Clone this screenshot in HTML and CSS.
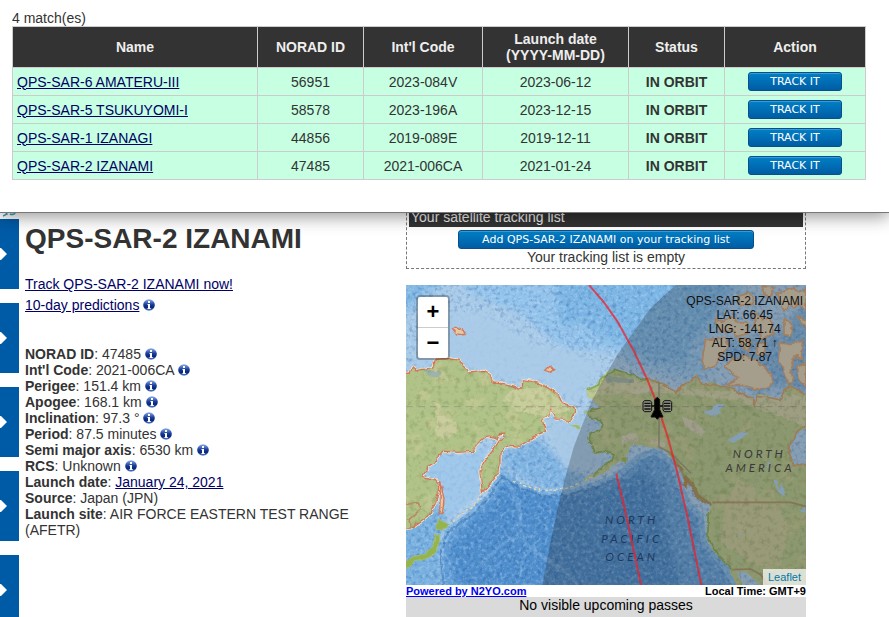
FILE: index.html
```html
<!DOCTYPE html>
<html lang="en">
<head>
<meta charset="utf-8">
<title>QPS-SAR-2 IZANAMI</title>
<link rel="stylesheet" href="styles.css">
</head>
<body>
<svg class="defs" aria-hidden="true">
  <defs>
    <linearGradient id="ball" x1="0" y1="0" x2="0" y2="1">
      <stop offset="0" stop-color="#8fb0ee"/>
      <stop offset=".45" stop-color="#1b3f9c"/>
      <stop offset=".7" stop-color="#0a2474"/>
      <stop offset="1" stop-color="#5c8be0"/>
    </linearGradient>
    <symbol id="info" viewBox="0 0 12 12">
      <circle cx="6" cy="6" r="5.8" fill="url(#ball)"/>
      <rect x="5" y="2" width="2" height="2" fill="#fff"/>
      <path d="M4.5 5h2.5v4h.7v1H4.5V9H5V6h-.5z" fill="#fff"/>
    </symbol>
  </defs>
</svg>

<section class="results">
  <div class="count">4 match(es)</div>
  <table class="matches">
    <colgroup><col class="c-name"><col class="c-norad"><col class="c-code"><col class="c-date"><col class="c-status"><col class="c-action"></colgroup>
    <thead>
      <tr><th>Name</th><th>NORAD ID</th><th>Int'l Code</th><th>Launch date<br>(YYYY-MM-DD)</th><th>Status</th><th>Action</th></tr>
    </thead>
    <tbody>
      <tr><td><a href="#">QPS-SAR-6 AMATERU-III</a></td><td>56951</td><td>2023-084V</td><td>2023-06-12</td><td><b>IN ORBIT</b></td><td><button class="btn track">TRACK IT</button></td></tr>
      <tr><td><a href="#">QPS-SAR-5 TSUKUYOMI-I</a></td><td>58578</td><td>2023-196A</td><td>2023-12-15</td><td><b>IN ORBIT</b></td><td><button class="btn track">TRACK IT</button></td></tr>
      <tr><td><a href="#">QPS-SAR-1 IZANAGI</a></td><td>44856</td><td>2019-089E</td><td>2019-12-11</td><td><b>IN ORBIT</b></td><td><button class="btn track">TRACK IT</button></td></tr>
      <tr><td><a href="#">QPS-SAR-2 IZANAMI</a></td><td>47485</td><td>2021-006CA</td><td>2021-01-24</td><td><b>IN ORBIT</b></td><td><button class="btn track">TRACK IT</button></td></tr>
    </tbody>
  </table>
</section>

<main class="page">
  <nav class="rail">
    <svg class="swirl" viewBox="0 0 13 8" aria-hidden="true"><path d="M0 7L4 5C2 3 3 1 6 1s6 2 6 3-3 2-5 1" fill="none" stroke="#3aa0b4" stroke-width="1.4"/></svg>
    <a class="tab" href="#" aria-label="Open panel 1"><svg viewBox="0 0 7 14"><path d="M0 1L1 1L7 7L1 13L0 13Z"/></svg></a>
    <a class="tab" href="#" aria-label="Open panel 2"><svg viewBox="0 0 7 14"><path d="M0 1L1 1L7 7L1 13L0 13Z"/></svg></a>
    <a class="tab" href="#" aria-label="Open panel 3"><svg viewBox="0 0 7 14"><path d="M0 1L1 1L7 7L1 13L0 13Z"/></svg></a>
    <a class="tab" href="#" aria-label="Open panel 4"><svg viewBox="0 0 7 14"><path d="M0 1L1 1L7 7L1 13L0 13Z"/></svg></a>
    <a class="tab" href="#" aria-label="Open panel 5"><svg viewBox="0 0 7 14"><path d="M0 1L1 1L7 7L1 13L0 13Z"/></svg></a>
  </nav>

  <article class="details">
    <h1>QPS-SAR-2 IZANAMI</h1>
    <div class="links">
      <div><a href="#">Track QPS-SAR-2 IZANAMI now!</a></div>
      <div><a href="#">10-day predictions</a> <svg class="info"><use href="#info"/></svg></div>
    </div>
    <div class="facts">
      <div><b>NORAD ID</b>: 47485 <svg class="info"><use href="#info"/></svg></div>
      <div><b>Int'l Code</b>: 2021-006CA <svg class="info"><use href="#info"/></svg></div>
      <div><b>Perigee</b>: 151.4 km <svg class="info"><use href="#info"/></svg></div>
      <div><b>Apogee</b>: 168.1 km <svg class="info"><use href="#info"/></svg></div>
      <div><b>Inclination</b>: 97.3 ° <svg class="info"><use href="#info"/></svg></div>
      <div><b>Period</b>: 87.5 minutes <svg class="info"><use href="#info"/></svg></div>
      <div><b>Semi major axis</b>: 6530 km <svg class="info"><use href="#info"/></svg></div>
      <div><b>RCS</b>: Unknown <svg class="info"><use href="#info"/></svg></div>
      <div><b>Launch date</b>: <a href="#">January 24, 2021</a></div>
      <div><b>Source</b>: Japan (JPN)</div>
      <div><b>Launch site</b>: AIR FORCE EASTERN TEST RANGE (AFETR)</div>
    </div>
  </article>

  <aside class="side">
    <section class="tracking">
      <div class="tracking-head">Your satellite tracking list</div>
      <button class="btn add">Add QPS-SAR-2 IZANAMI on your tracking list</button>
      <div>Your tracking list is empty</div>
    </section>

    <div class="map">
      <svg class="chart" viewBox="6 6 1200 900" preserveAspectRatio="xMidYMid slice" role="img" aria-label="Satellite position map">
        <defs>
          <filter id="rough" x="0" y="0" width="1" height="1" color-interpolation-filters="sRGB">
            <feTurbulence type="fractalNoise" baseFrequency=".05" numOctaves="2" seed="4" result="n"/>
            <feDisplacementMap in="SourceGraphic" in2="n" scale="14" xChannelSelector="R" yChannelSelector="G"/>
          </filter>
          <filter id="soft" x="-.1" y="-.1" width="1.2" height="1.2" color-interpolation-filters="sRGB"><feGaussianBlur stdDeviation="9"/></filter>
          <filter id="sea" x="0" y="0" width="1" height="1" color-interpolation-filters="sRGB">
            <feTurbulence type="fractalNoise" baseFrequency=".09" numOctaves="3" seed="9"/>
            <feColorMatrix values="0 0 0 0 .8  0 0 0 0 .9  0 0 0 0 1  2.2 0 0 0 -1.02"/>
          </filter>
          <filter id="seadark" x="0" y="0" width="1" height="1" color-interpolation-filters="sRGB">
            <feTurbulence type="fractalNoise" baseFrequency=".08" numOctaves="3" seed="21"/>
            <feColorMatrix values="0 0 0 0 .05  0 0 0 0 .25  0 0 0 0 .55  2 0 0 0 -.98"/>
          </filter>
          <filter id="tan" x="0" y="0" width="1" height="1" color-interpolation-filters="sRGB">
            <feTurbulence type="fractalNoise" baseFrequency=".016" numOctaves="5" seed="12"/>
            <feColorMatrix values="0 0 0 0 .8  0 0 0 0 .8  0 0 0 0 .6  9 0 0 0 -5.1"/>
          </filter>
          <filter id="relief" x="0" y="0" width="1" height="1" color-interpolation-filters="sRGB">
            <feTurbulence type="fractalNoise" baseFrequency=".06" numOctaves="3" seed="31"/>
            <feColorMatrix values="0 0 0 0 .35  0 0 0 0 .45  0 0 0 0 .2  2 0 0 0 -.98"/>
          </filter>
          <path id="asia" d="M-10 272L18 270 25 255 35 263 50 260 85 255 90 240 100 228 130 226 165 232 172 245 188 258 195 270 240 265 258 275 265 300 300 302 330 310 345 322 355 312 355 290 385 295 415 305 440 320 465 340 475 360 490 365 515 380 508 395 495 415 475 405 455 405 440 375 435 395 415 412 425 445 400 455 370 475 345 490 320 487 300 495 288 510 288 545 285 565 268 590 245 615 235 628 232 600 228 565 240 535 260 510 275 490 285 475 298 465 302 450 288 452 280 468 262 460 240 465 220 485 205 505 165 508 120 505 105 515 92 540 75 550 52 580 72 585 90 588 105 605 102 630 95 660 75 695 50 715 20 735-10 737Z"/>
          <path id="america" d="M552 320L575 310 595 285 610 268 635 260 665 270 700 285 730 292 765 298 790 310 812 328 830 315 850 300 870 298 880 280 895 305 920 300 950 310 985 312 1005 330 1045 345 1050 370 1058 340 1075 335 1100 345 1130 350 1140 320 1160 310 1190 330 1220 335V425L1180 445 1160 480 1155 510 1170 545 1220 545V920H1085L1045 880 1020 862 995 862 1022 920 1008 920 985 870 975 850 950 825 930 800 912 765 910 720 915 690 922 670 905 655 880 640 870 615 850 590 830 560 815 535 800 520 775 495 750 490 720 485 700 490 690 478 675 490 672 508 650 530 630 545 600 565 570 582 540 595 565 575 600 550 625 530 630 515 600 505 570 510 560 480 555 465 562 450 590 440 595 415 550 400 545 385 590 375 575 355 555 340Z"/>
          <clipPath id="land"><use href="#asia"/><use href="#america"/></clipPath>
        </defs>

        <rect x="0" y="0" width="1210" height="910" fill="#a9cbe8"/>
        <g filter="url(#soft)">
          <path d="M-20-20H150L60 40-20 110Z" fill="#83b9e4"/>
          <path d="M170-20L200 30 270 60 350 90 420 150 470 190 500 200 620 205 700 255 850 290 930 270 900 190 980 60 1040-20Z" fill="#93c3ea"/>
          <path d="M455-20L470 125 545 120 570 150 650 180 740 235 850 245 850 200 910 130 1000-20Z" fill="#7cb6e4"/>
          <path d="M300 560L290 510 350 490 400 465 450 510 490 560 560 585 500 625 430 625Z" fill="#80b4e1"/>
          <path d="M-10 740L90 660 130 700 100 780 130 920H-10Z" fill="#78b0df"/>
          <path d="M950 180L1130 150 1220 30V330L1110 310 1060 340Z" fill="#7fb0da"/>
        </g>
        <path d="M115 916L110 800 135 740 200 695 260 635 295 570 350 610 430 632 500 628 560 610 640 580 700 525 750 505 800 535 830 610 850 660 890 700 900 780 960 850 1000 916Z" fill="#64a0d8" stroke="#80b5e2" stroke-width="18"/>
        <path d="M160 910L135 790 200 715 270 650 300 585 360 620 440 645 560 625 650 600 720 560 770 620 790 760 830 910Z" fill="#4e8dcb" filter="url(#soft)"/>
        <path d="M120 906L108 810 135 745 205 697 262 636 293 578 350 617 430 640 500 636 560 617 640 588" fill="none" stroke="#3773b2" stroke-width="7" opacity=".55" filter="url(#rough)"/>
        <g fill="none" stroke="#8dbde6" opacity=".3" filter="url(#rough)">
          <path d="M300 590Q350 640 350 740Q360 790 400 810L460 850 520 900" stroke-width="13"/>
          <path d="M230 850Q300 770 345 760M400 770Q340 840 350 880M600 6Q620 80 580 110L620 170M650 6Q640 100 570 190" stroke-width="9"/>
          <path d="M370 600Q380 560 430 565Q445 590 410 620" stroke-width="4"/>
        </g>
        <rect x="0" y="0" width="1210" height="910" filter="url(#sea)" opacity=".45"/>
        <rect x="0" y="0" width="1210" height="910" filter="url(#seadark)" opacity=".4"/>
        <path d="M150 240Q300 310 430 300L520 370Q540 300 600 250L500 200 400 190 250 90 130 90 20 250Z" fill="#abcce9" opacity=".85" filter="url(#soft)"/>
        <path d="M430 420L540 390 560 490 590 540 500 560 450 500Z" fill="#a8cae7" opacity=".85" filter="url(#soft)"/>
        <path d="M100 520L200 515 260 480 225 550 225 630 130 710 115 600 70 575Z" fill="#9bc6eb" opacity=".7"/>

        <g filter="url(#rough)">
          <g fill="#b1c286" stroke="#f0e8cf" stroke-width="9" stroke-linejoin="round"><use href="#asia"/></g>
          <use href="#asia" fill="#b1c389" stroke="#d3785c" stroke-width="4"/>
          <use href="#america" fill="#b4c48c" stroke="#b9c490" stroke-width="5"/>
          <g clip-path="url(#land)">
            <rect x="0" y="0" width="1210" height="910" filter="url(#tan)" opacity=".5"/>
            <path d="M330 320L420 310 500 380 430 400 350 390 290 350Z" fill="#d3d2a5" opacity=".65"/>
            <path d="M590 300L640 280 780 305 900 320 1206 340 1206 430 1120 400 1000 350 880 340 720 325 570 340Z" fill="#d6d2b2" opacity=".7"/>
            <path d="M960 670L1000 590 1050 610 1060 660 1120 670 1150 730 1130 850 1060 850 950 780Z" fill="#d2cba1" opacity=".6"/>
            <path d="M605 275L690 290 690 300 610 298ZM60 260L110 265 105 285 75 280Z" fill="#a0b3a8"/>
            <path d="M830 400L870 410 905 450 890 460 850 435ZM650 460L700 450 700 475 650 485ZM740 470L790 480 780 490 740 482ZM680 325L750 315 750 325 690 335Z" fill="#d4cdbb" opacity=".8"/>
            <path d="M85 360L110 360 120 400 160 420 160 450 120 470 90 450 100 410Z" fill="#d1d0a4" opacity=".7"/>
            <rect x="0" y="0" width="1210" height="910" filter="url(#relief)" opacity=".4"/>
          </g>
          <path d="M730 288L765 298 790 310 812 328 850 300 880 283 895 305 950 310 985 312 1005 330 1045 345 1050 370 1058 340 1100 345 1130 350 1140 320 1160 310 1206 335M1206 425L1180 445 1160 480 1155 510 1170 545 1206 545" fill="none" stroke="#cc9c6b" stroke-width="5"/>
          <path d="M552 320L575 310 595 285 635 260 665 270 730 292M545 385L590 375M550 400L595 415 590 440 562 450 555 465 570 510 600 505 630 515 625 530 565 578M912 690V765L950 825 985 862" fill="none" stroke="#87a857" stroke-width="5"/>
          <path d="M840 580L850 590 870 615 880 640 920 665" fill="none" stroke="#a5834c" stroke-width="12" opacity=".8"/>
          <path d="M800 510L830 560 850 590" fill="none" stroke="#94975c" stroke-width="9" opacity=".7"/>
          <path d="M835 580L850 595 845 612ZM820 545L838 562" fill="#b3854f" stroke="#b3854f" stroke-width="5"/>
          <g fill="#d8cdb6" stroke="#d3a273" stroke-width="5" stroke-linejoin="round">
            <path d="M905 170L960 165 975 190 955 215 935 245 900 260 895 230Z"/>
            <path d="M965 250L985 228 1010 232 1020 215 1040 230 1060 235 1100 270 1108 300 1065 320 1010 305 970 305 1002 285Z"/>
            <path d="M1130 180L1160 185 1195 170 1192 230 1175 215 1160 250 1168 300 1150 300 1140 260 1125 240Z"/>
            <path d="M930 110L955 118 985 100 1000 118 1030 120 1035 150 1000 160 980 140 950 145ZM1055 90L1080 110 1100 105 1110 150 1070 170 1065 145 1050 130Z"/>
            <path d="M1000 40L1040 30 1050 60 1010 68ZM1075 10L1110 15 1100 40 1080 35ZM1120 30L1140 25 1170 12 1180 28 1206 20 1206 80 1180 60 1170 75 1155 60 1140 85ZM1140 110L1165 125 1160 160 1140 155ZM1180 100L1206 110 1206 140ZM1005 165L1040 175 1035 205 1010 190ZM1060 185L1085 180 1080 215 1060 212ZM1180 250L1206 240 1206 310 1185 290Z"/>
          </g>
          <g fill="#e3caa2" stroke="#d3785c" stroke-width="4">
            <path d="M145 135L155 130 183 145 180 155 158 153ZM422 262L435 250 452 260 440 268ZM110 595L120 650 115 692 107 690Z"/>
          </g>
          <g fill="#93b44e" stroke="#a7bd69" stroke-width="3">
            <path d="M105 710L115 715 138 725 125 735 105 742 95 735ZM95 755L107 760 105 785 95 805 80 820 55 830 35 835 20 850 2 860V835L30 820 60 815 75 800 88 785ZM503 430L525 432 520 438ZM545 382L556 385 542 390ZM650 530L668 520 665 540Z"/>
          </g>
          <path d="M565 580L535 597 505 608 470 617 425 623 390 618 360 605 330 592M235 632L210 665 180 690 140 718" fill="none" stroke="#e8d9b2" stroke-width="4" stroke-dasharray="9 7"/>
          <g fill="#a9cdec">
            <path d="M900 382L925 380 935 365 965 362 945 378 955 390 930 395 935 405 918 395ZM970 475L995 458 1010 448 1035 450 1005 470 985 478ZM1108 595L1120 592 1125 620 1135 600 1145 640 1125 630ZM1090 535L1100 540 1092 560ZM1185 680L1206 672V690ZM1003 748L1012 750 1008 760Z"/>
          </g>
          <path d="M0 665L40 660 48 680 15 710 20 735" fill="none" stroke="#b98a64" stroke-width="5"/>
        </g>
        <path d="M925 658H1160L1206 670M985 860L1040 858 1070 875 1090 906" fill="none" stroke="#a98b67" stroke-width="5" opacity=".85"/>
        <path d="M765 298V492L800 510 860 570" fill="none" stroke="#998e7a" stroke-width="5" opacity=".8"/>
        <path d="M6 371H1206" stroke="#777" stroke-width="3" stroke-dasharray="20 16" opacity=".45"/>

        <g class="region dark"><text x="1066" y="525">NORTH</text><text x="1068" y="567">AMERICA</text></g>
        <g class="region ocean"><text x="683" y="724">NORTH</text><text x="683" y="779">PACIFIC</text><text x="683" y="833">OCEAN</text></g>

        <path d="M815 6L740 75 690 145 640 215 600 285 565 350 535 425 510 490 490 560 460 680 435 800 415 906H1206V6Z" fill="#222" opacity=".27"/>
        <path d="M555 6L600 58 640 115 690 205 730 290 760 365 792 465 818 560 850 700 892 906M637 572L665 690 711 906" fill="none" stroke="#ec2029" stroke-width="6" opacity=".75"/>
        <g stroke="#111">
          <path d="M743 369H777" stroke-width="5"/>
          <path d="M760 343L767 350V380L777 402 766 402 760 409 754 402 741 402 752 380V350Z" stroke-width="3"/>
          <path d="M721 353H739L743 358V382L739 386H721L717 381V358ZM781 353H799L803 358V382L799 386H781L777 381V358Z" fill="#8c8f80" stroke-width="3"/>
          <path d="M721 361H740M721 369H740M721 378H740M780 361H799M780 369H799M780 378H799" stroke-width="4"/>
        </g>
      </svg>
      <div class="zoom"><button aria-label="Zoom in">+</button><button aria-label="Zoom out">−</button></div>
      <div class="readout">QPS-SAR-2 IZANAMI<br>LAT: 66.45<br>LNG: -141.74<br>ALT: 58.71 ↑<br>SPD: 7.87</div>
      <a class="leaflet" href="#">Leaflet</a>
    </div>
    <div class="credit"><a href="#">Powered by N2YO.com</a><span>Local Time: GMT+9</span></div>
    <div class="passes">No visible upcoming passes</div>
  </aside>
</main>
</body>
</html>
```
FILE: styles.css
```css
* { box-sizing: border-box; }

body {
  margin: 0;
  min-height: 100vh;
  overflow: hidden;
  background: #fff;
  color: #333;
  font: 14px/16px "Liberation Sans", Arial, sans-serif;
}

a { color: #006; }
.defs { position: absolute; width: 0; height: 0; }

/* Search results laid over the page */
.results {
  position: absolute;
  top: 0;
  left: 0;
  right: 0;
  z-index: 5;
  padding: 10px 23px 32px 12px;
  background: #fff;
  border-bottom: 1px solid #777;
  box-shadow: 0 4px 16px rgba(0, 0, 0, .4);
}

.matches {
  width: 100%;
  table-layout: fixed;
  border-collapse: collapse;
  text-align: center;
}
.matches th, .matches td { border: 1px solid #ccc; padding: 0 4px; }
.matches th { height: 41px; background: #333; color: #eee; }
.matches td { height: 28px; background: #c6ffe2; }
.matches td:first-child { text-align: left; }
.c-norad { width: 106px; }
.c-code { width: 119px; }
.c-date { width: 146px; }
.c-status { width: 96px; }
.c-action { width: 141px; }

.btn {
  display: block;
  height: 19px;
  margin: 0 auto;
  padding: 0 21px;
  border: 1px solid #0b4f8a;
  border-radius: 3px;
  background: linear-gradient(#0080c6, #005ca4);
  box-shadow: inset 0 1px 0 #3a9bd6;
  color: #fff;
  font: 11px/16px "DejaVu Sans", Verdana, sans-serif;
  white-space: nowrap;
}
.btn.add { padding: 0 23px; }

.page {
  display: grid;
  grid-template-columns: 19px 387px 400px;
  padding-top: 203px;
}

.rail {
  display: flex;
  flex-direction: column;
  gap: 14px;
  height: 414px;
}
.swirl { width: 13px; height: 8px; margin: 6px 0 -12px 3px; flex: none; }
.tab {
  display: flex;
  align-items: center;
  flex: none;
  height: 70px;
  background: #005ba6;
}
.tab svg { width: 7px; height: 14px; fill: #fff; }

.details { padding: 20px 24px 0 6px; }
h1 { margin: 0; font-size: 28px; line-height: 32px; }
.links { margin-top: 19px; line-height: 21px; }
.facts { margin-top: 30px; }
.info { width: 12px; height: 12px; vertical-align: -1px; }
.facts .info, .links .info { vertical-align: 0; margin-bottom: -1px; }

.tracking {
  padding: 2px 2px 3px;
  border: 1px dashed #777;
  text-align: center;
}
.tracking-head {
  margin-bottom: 3px;
  padding: 3px 2px 2px;
  background: #333;
  color: #eee;
  text-align: left;
}

.map {
  position: relative;
  margin-top: 16px;
  aspect-ratio: 4 / 3;
  overflow: hidden;
}
.chart { display: block; width: 100%; height: 100%; }
.region {
  font: italic 35px Lato, "Open Sans", sans-serif;
  letter-spacing: 9px;
  text-anchor: middle;
}
.dark { fill: #444; }
.ocean { fill: #1c4374; }

.zoom {
  position: absolute;
  top: 10px;
  left: 10px;
  border: 2px solid rgba(0, 0, 0, .25);
  border-radius: 4px;
  background-clip: padding-box;
}
.zoom button {
  display: block;
  width: 30px;
  height: 30px;
  padding: 0;
  border: 0;
  background: #fff;
  color: #000;
  font: bold 22px/30px "Liberation Sans", Arial, sans-serif;
}
.zoom button:first-child { height: 31px; border-bottom: 1px solid #ccc; border-radius: 2px 2px 0 0; }
.zoom button:last-child { border-radius: 0 0 2px 2px; }

.readout {
  position: absolute;
  top: 9px;
  right: 3px;
  color: #111;
  font-size: 12px;
  line-height: 14px;
  text-align: center;
}
.leaflet {
  position: absolute;
  right: 0;
  bottom: 0;
  padding: 0 5px;
  background: rgba(255, 255, 255, .7);
  color: #0078a8;
  font-size: 11px;
  text-decoration: none;
}

.credit {
  display: flex;
  justify-content: space-between;
  color: #000;
  font-size: 11px;
  font-weight: bold;
  line-height: 12px;
}
.credit a { color: #00e; }
.passes {
  height: 20px;
  background: #dadada;
  color: #000;
  text-align: center;
}
```
